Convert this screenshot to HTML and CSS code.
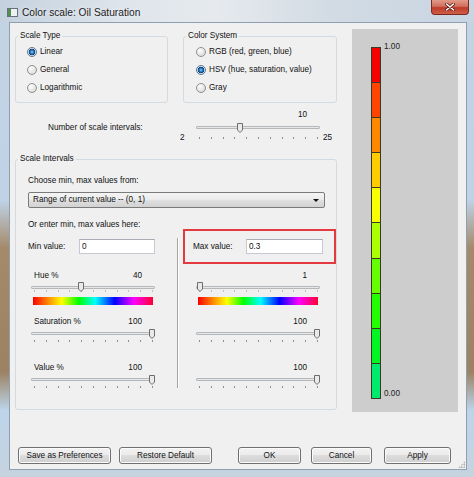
FILE: index.html
```html
<!DOCTYPE html>
<html lang="en">
<head>
    <meta charset="UTF-8">
    <title>Color scale: Oil Saturation</title>
    <link rel="stylesheet" href="styles.css">
</head>
<body>
<div class="window">
    <div class="titlebar">
        <svg class="app-icon" width="11" height="9" viewBox="0 0 11 9">
            <rect x="0.5" y="0.5" width="10" height="8" fill="#eef1f3" stroke="#66717c"/>
            <rect x="1" y="1" width="3" height="7" fill="#4f8f4f"/>
        </svg>
        <span class="title">Color scale: Oil Saturation</span>
        <div class="close">
            <svg width="10" height="8" viewBox="0 0 10 8">
                <path d="M1.5 1 L8.5 7 M8.5 1 L1.5 7" stroke="#5b1a12" stroke-width="3" stroke-linecap="round"/>
                <path d="M1.5 1 L8.5 7 M8.5 1 L1.5 7" stroke="#fff" stroke-width="1.6" stroke-linecap="round"/>
            </svg>
        </div>
    </div>

    <div class="client">
        <div class="main">
            <div class="left">
                <div class="top-groups">
                    <fieldset class="group scale-type">
                        <legend>Scale Type</legend>
                        <div class="radio-list">
                            <div class="radio-row"><span class="radio on"></span>Linear</div>
                            <div class="radio-row"><span class="radio"></span>General</div>
                            <div class="radio-row"><span class="radio"></span>Logarithmic</div>
                        </div>
                    </fieldset>
                    <fieldset class="group color-system">
                        <legend>Color System</legend>
                        <div class="radio-list">
                            <div class="radio-row"><span class="radio"></span>RGB (red, green, blue)</div>
                            <div class="radio-row"><span class="radio on"></span>HSV (hue, saturation, value)</div>
                            <div class="radio-row"><span class="radio"></span>Gray</div>
                        </div>
                    </fieldset>
                </div>

                <div class="interval-row">
                    <div class="interval-label">Number of scale intervals:</div>
                    <div class="interval-end low">2</div>
                    <div class="sblock">
                        <div class="s-head"><span></span><span>10</span></div>
                        <div class="slider wide">
                            <div class="track"></div>
                            <svg class="thumb" style="--v:0.348" width="6" height="10" viewBox="0 0 6 10"><path d="M0.5 0.5 H5.5 V7 L3 9.5 L0.5 7 Z"/></svg>
                            <div class="ticks"></div>
                        </div>
                    </div>
                    <div class="interval-end high">25</div>
                </div>

                <fieldset class="group intervals">
                    <legend>Scale Intervals</legend>
                    <div class="intervals-body">
                        <div class="hint">Choose min, max values from:</div>
                        <div class="combo">
                            <span>Range of current value -- (0, 1)</span>
                            <span class="combo-arrow"></span>
                        </div>
                        <div class="hint tight">Or enter min, max values here:</div>

                        <div class="minmax">
                            <div class="value-row">
                                <label>Min value:</label>
                                <input type="text" value="0">
                            </div>
                            <div class="vsep"></div>
                            <div class="value-row highlight">
                                <label>Max value:</label>
                                <input type="text" value="0.3">
                            </div>

                            <div class="sblock hue">
                                <div class="s-head"><span>Hue %</span><span>40</span></div>
                                <div class="slider">
                                    <div class="track"></div>
                                    <svg class="thumb" style="--v:0.4" width="6" height="10" viewBox="0 0 6 10"><path d="M0.5 0.5 H5.5 V7 L3 9.5 L0.5 7 Z"/></svg>
                                    <div class="ticks faint"></div>
                                </div>
                                <div class="rainbow"></div>
                            </div>
                            <div class="sblock hue right">
                                <div class="s-head"><span></span><span>1</span></div>
                                <div class="slider">
                                    <div class="track"></div>
                                    <svg class="thumb" style="--v:0.01" width="6" height="10" viewBox="0 0 6 10"><path d="M0.5 0.5 H5.5 V7 L3 9.5 L0.5 7 Z"/></svg>
                                    <div class="ticks faint"></div>
                                </div>
                                <div class="rainbow"></div>
                            </div>

                            <div class="sblock sat">
                                <div class="s-head"><span>Saturation %</span><span>100</span></div>
                                <div class="slider">
                                    <div class="track"></div>
                                    <svg class="thumb" style="--v:1" width="6" height="10" viewBox="0 0 6 10"><path d="M0.5 0.5 H5.5 V7 L3 9.5 L0.5 7 Z"/></svg>
                                    <div class="ticks"></div>
                                </div>
                            </div>
                            <div class="sblock sat right">
                                <div class="s-head"><span></span><span>100</span></div>
                                <div class="slider">
                                    <div class="track"></div>
                                    <svg class="thumb" style="--v:1" width="6" height="10" viewBox="0 0 6 10"><path d="M0.5 0.5 H5.5 V7 L3 9.5 L0.5 7 Z"/></svg>
                                    <div class="ticks"></div>
                                </div>
                            </div>

                            <div class="sblock val">
                                <div class="s-head"><span>Value %</span><span>100</span></div>
                                <div class="slider">
                                    <div class="track"></div>
                                    <svg class="thumb" style="--v:1" width="6" height="10" viewBox="0 0 6 10"><path d="M0.5 0.5 H5.5 V7 L3 9.5 L0.5 7 Z"/></svg>
                                    <div class="ticks"></div>
                                </div>
                            </div>
                            <div class="sblock val right">
                                <div class="s-head"><span></span><span>100</span></div>
                                <div class="slider">
                                    <div class="track"></div>
                                    <svg class="thumb" style="--v:1" width="6" height="10" viewBox="0 0 6 10"><path d="M0.5 0.5 H5.5 V7 L3 9.5 L0.5 7 Z"/></svg>
                                    <div class="ticks"></div>
                                </div>
                            </div>
                        </div>
                    </div>
                </fieldset>
            </div>

            <div class="panel">
                <div class="colorbar">
                    <div class="seg" style="background:hsl(0,100%,48%)"></div>
                    <div class="seg" style="background:hsl(16,100%,50%)"></div>
                    <div class="seg" style="background:hsl(32,100%,50%)"></div>
                    <div class="seg" style="background:hsl(48,100%,50%)"></div>
                    <div class="seg" style="background:hsl(62,100%,50%)"></div>
                    <div class="seg" style="background:hsl(80,100%,50%)"></div>
                    <div class="seg" style="background:hsl(96,100%,50%)"></div>
                    <div class="seg" style="background:hsl(112,100%,50%)"></div>
                    <div class="seg" style="background:hsl(128,100%,48%)"></div>
                    <div class="seg" style="background:hsl(148,100%,46%)"></div>
                </div>
                <div class="bar-labels">
                    <span>1.00</span>
                    <span>0.00</span>
                </div>
            </div>
        </div>

        <div class="footer">
            <button class="btn save">Save as Preferences</button>
            <button class="btn restore">Restore Default</button>
            <button class="btn ok">OK</button>
            <button class="btn cancel">Cancel</button>
            <button class="btn apply">Apply</button>
            <div class="grip"></div>
        </div>
    </div>
</div>
</body>
</html>
```

FILE: styles.css
```css
* {
    box-sizing: border-box;
}
body {
    margin: 0;
    font-family: "Liberation Sans", Arial, sans-serif;
    font-size: 8.2px;
    line-height: 10px;
    color: #111;
}
.window {
    width: 474px;
    height: 477px;
    display: flex;
    flex-direction: column;
    background: linear-gradient(to bottom, #c3d3e3 0%, #bfd2e6 42%, #a48a6a 52%, #9c8262 78%, #bdd4ea 86%, #c6d3df 100%);
}
.titlebar {
    height: 22px;
    display: flex;
    align-items: flex-start;
    background: linear-gradient(to right, #c4d1de, #dde4eb 25%, #e6eaee 45%, #d2dbe4 70%, #c8d5e2);
}
.app-icon {
    margin: 8px 0 0 7px;
}
.title {
    margin: 7px 0 0 4px;
    font-size: 10.2px;
    line-height: 11px;
    color: #1c1c1c;
    text-shadow: 0 0 4px #fff;
}
.close {
    margin-left: auto;
    margin-right: 5px;
    width: 38px;
    height: 15px;
    display: flex;
    align-items: center;
    justify-content: center;
    border: 1px solid #7a2a20;
    border-top: none;
    border-radius: 0 0 4px 4px;
    background: linear-gradient(to bottom, #e29a8a, #d0705c 45%, #c0392b 55%, #cf5f45);
}
.client {
    height: 448px;
    margin: 0 7px 0 9px;
    background: #f0f0f0;
    border: 1px solid #8e9fb1;
    display: flex;
    flex-direction: column;
}
.main {
    display: flex;
    padding: 6px 0 0 5px;
}
.left {
    width: 322px;
    display: flex;
    flex-direction: column;
}
.top-groups {
    display: flex;
    gap: 15px;
    margin-top: 2px;
}
.group {
    margin: 0;
    padding: 0;
    min-width: 0;
    border: 1px solid #d3dbe1;
    border-radius: 3px;
}
.group legend {
    padding: 0 2px;
    margin-left: 2px;
    line-height: 10px;
}
.scale-type {
    width: 153px;
}
.color-system {
    width: 154px;
}
.radio-list {
    padding: 2px 0 5px 11px;
}
.color-system .radio-list {
    padding-left: 12px;
}
.radio-row {
    height: 18px;
    display: flex;
    align-items: center;
}
.radio {
    width: 10px;
    height: 10px;
    margin-right: 3px;
    border-radius: 50%;
    border: 1px solid #8f9090;
    background: radial-gradient(circle at 35% 30%, #ffffff, #dcdcdc 75%);
}
.radio.on {
    border-color: #5b7a96;
    background: radial-gradient(circle, #8fd0f7 0, #2c7fc4 1.6px, #0e3e78 3px, #e4e8eb 3.6px, #d4d7da 100%);
}

/* number of intervals */
.interval-row {
    display: flex;
    align-items: flex-start;
    margin-top: 7px;
}
.interval-label {
    width: 155px;
    padding-left: 33px;
    margin-top: 13px;
}
.interval-end {
    margin-top: 23px;
}
.interval-end.low {
    width: 26px;
    padding-left: 10px;
}
.interval-end.high {
    margin-left: 3px;
}
.sblock {
    width: 124px;
}
.s-head {
    display: flex;
    justify-content: space-between;
    padding: 0 13px 0 3px;
    height: 10px;
}
.slider {
    position: relative;
    padding-top: 4px;
    margin-top: 1px;
}
.slider.wide {
    margin-top: 2px;
}
.track {
    height: 3px;
    border: 1px solid #b5b8ba;
    border-radius: 1px;
    background: #e6e7e8;
}
.thumb {
    position: absolute;
    top: 1px;
    left: calc(var(--v) * (100% - 6px));
}
.thumb path {
    fill: #eaeaea;
    stroke: #6d6d6d;
}
.ticks {
    height: 2px;
    margin: 5px 2px 0 3px;
    background: repeating-linear-gradient(to right, #8e8e8e 0 1px, transparent 1px 11.8px);
}
.wide .ticks {
    margin-top: 8px;
}
.ticks.faint {
    margin-top: 1px;
    opacity: 0.5;
}
.hue .thumb {
    top: 0;
}

/* scale intervals */
.intervals {
    width: 322px;
    margin-top: 11px;
}
.intervals-body {
    padding: 12px 0 21px 12px;
}
.combo {
    width: 297px;
    height: 16px;
    margin-top: 6px;
    display: flex;
    align-items: center;
    justify-content: space-between;
    padding: 0 4px;
    border: 1px solid #7a7a7a;
    border-radius: 2px;
    background: linear-gradient(to bottom, #f4f4f4, #ececec 45%, #dedede 55%, #d2d2d2);
}
.combo-arrow {
    width: 0;
    height: 0;
    border-left: 3px solid transparent;
    border-right: 3px solid transparent;
    border-top: 3px solid #111;
    margin-right: 1px;
}
.hint.tight {
    margin-top: 13px;
    line-height: 8px;
}
.minmax {
    display: grid;
    grid-template-columns: 149px 1px 158px;
    grid-template-rows: 35px;
}
.value-row {
    height: 35px;
    display: flex;
    align-items: center;
}
.value-row label {
    width: 51px;
}
.value-row input {
    width: 76px;
    height: 15px;
    padding: 0 2px;
    border: 1px solid #c5cad1;
    border-top-color: #a9adb3;
    background: #fff;
    font: inherit;
    color: #111;
}
.value-row.highlight {
    margin-left: 5px;
    padding-left: 8px;
    border: 2px solid #e23a3e;
}
.value-row.highlight label {
    width: 53px;
}
.value-row.highlight input {
    width: 77px;
}
.vsep {
    grid-row: span 4;
    margin: 9px 0 0;
    background: #a3a3a3;
    box-shadow: 1px 0 0 #fff;
}
.minmax .sblock {
    margin-left: 3px;
}
.minmax .sblock.right {
    margin-left: 18px;
}
.sblock.hue {
    margin-top: 7px;
}
.sblock.sat {
    margin-top: 12px;
}
.sblock.val {
    margin-top: 21px;
}
.rainbow {
    height: 8px;
    margin: 5px 2px 0;
    background: linear-gradient(to right, #ff0000, #ff9900 14%, #ffff00 24%, #00ff00 38%, #00ffff 52%, #0000ff 68%, #ff00ff 84%, #ff0033);
}

/* colour scale panel */
.panel {
    width: 106px;
    height: 383px;
    margin-left: 15px;
    background: #cdcdcd;
    display: flex;
}
.colorbar {
    width: 10px;
    height: 352px;
    margin: 18px 0 0 19px;
    display: flex;
    flex-direction: column;
    border: 1px solid #3c3a22;
}
.seg {
    flex: 1;
    border-top: 1px solid #3c3a22;
}
.seg:first-child {
    border-top: none;
}
.bar-labels {
    height: 357px;
    margin: 13px 0 0 3px;
    display: flex;
    flex-direction: column;
    justify-content: space-between;
    color: #222;
}

/* buttons */
.footer {
    display: flex;
    margin-top: 35px;
    padding-left: 8px;
}
.btn {
    height: 17px;
    padding: 0;
    font: inherit;
    color: #111;
    border: 1px solid #707070;
    border-radius: 3px;
    background: linear-gradient(to bottom, #f3f3f3, #ebebeb 45%, #dddddd 50%, #cfcfcf);
    box-shadow: inset 0 0 0 1px #fbfbfb;
}
.save { width: 93px; }
.restore { width: 93px; margin-left: 8px; }
.ok { width: 63px; margin-left: 26px; }
.cancel { width: 61px; margin-left: 10px; }
.apply { width: 67px; margin-left: 12px; }
.grip {
    width: 7px;
    height: 7px;
    margin: 14px 1px 0 auto;
    background: radial-gradient(circle, #9a9a9a 0.7px, transparent 1px) 0 0 / 2.5px 2.5px;
    clip-path: polygon(100% 0, 100% 100%, 0 100%);
}
```
